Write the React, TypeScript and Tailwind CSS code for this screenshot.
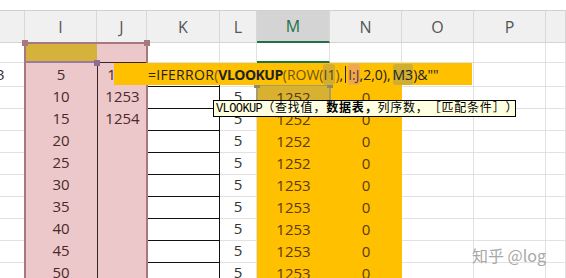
import React from "react";

const cols = ["H", "I", "J", "K", "L", "M", "N", "O", "P", ""];
const widths = "25px 72px 50px 73px 37px 73px 72px 72px 72px 20px";

const iVals = ["", "5", "10", "15", "20", "25", "30", "35", "40", "45", "50"];
const jVals = ["", "1", "1253", "1254", "", "", "", "", "", "", ""];
const mVals = ["", "", "1252", "1252", "1252", "1252", "1253", "1253", "1253", "1253", "1253"];

const cellBase = "h-full flex items-center justify-center border-r border-b border-[#e1e1e1]";

function cellFor(col: number, row: number) {
  // row 0 is row 1 of the sheet
  if (col === 0) {
    return (
      <div className={cellBase + " relative overflow-hidden"}>
        {row === 1 && <span className="absolute left-[-4px]">3</span>}
      </div>
    );
  }
  if (col === 1) {
    if (row === 0) return <div className="h-full bg-[#d5b23c] border-b-2 border-[#9b7ca0]" />;
    return (
      <div className="h-full flex items-center justify-center bg-[#ecc8ca] border-b border-[#e0b6b9] text-[#4a2a2a]">
        {iVals[row]}
      </div>
    );
  }
  if (col === 2) {
    return (
      <div
        className={
          "h-full flex items-center justify-center bg-[#ecc8ca] text-[#4a2a2a] " +
          (row === 0 ? "border-b border-[#3a2424]" : "border-l border-b border-[#3a2424]")
        }
      >
        {row === 1 ? <span className="mr-[22px]">1</span> : jVals[row]}
      </div>
    );
  }
  if (col === 3) {
    return (
      <div
        className={
          "h-full " +
          (row === 0 ? "border-b border-r border-[#e1e1e1]" : "border-b border-r border-[#111]")
        }
      />
    );
  }
  if (col === 4) {
    return <div className={cellBase}>{row >= 2 ? "5" : ""}</div>;
  }
  if (col === 5) {
    if (row === 0) return <div className="h-full border-r border-[#e1e1e1] border-b-2 border-b-[#217346]" />;
    if (row === 1) return <div className={cellBase} />;
    return (
      <div
        className={
          "h-full flex items-center justify-center text-[#5a3a10] " +
          (row === 2 ? "bg-[#d9b130]" : "bg-[#ffc000]")
        }
      >
        {mVals[row]}
      </div>
    );
  }
  if (col === 6) {
    if (row < 2) return <div className={cellBase} />;
    return <div className="h-full flex items-center justify-center bg-[#ffc000] text-[#5a3a10]">0</div>;
  }
  return <div className={cellBase} />;
}

export default function App() {
  const rows = Array.from({ length: 11 }, (_, i) => i);
  return (
    <div
      className="relative w-[566px] h-[278px] overflow-hidden bg-white text-[15px] text-[#333]"
      style={{ fontFamily: '"Open Sans", "Noto Sans", "Noto Sans CJK SC", sans-serif' }}
    >
      <div className="h-[11px] border-b border-[#d0d0d0]" />
      {/* column headers */}
      <div className="grid h-[32px] bg-[#f0f0f0]" style={{ gridTemplateColumns: widths }}>
        {cols.map((c, i) => (
          <div
            key={i}
            className={
              "flex items-center justify-center border-r border-[#d8d8d8] text-[16px] " +
              (c === "M"
                ? "bg-[#d4d4d4] text-[#217346] border-b-2 border-b-[#217346]"
                : "text-[#555] border-b border-b-[#d4d4d4]")
            }
          >
            {c === "H" ? "" : c}
          </div>
        ))}
      </div>
      {/* rows */}
      {rows.map((r) => (
        <div
          key={r}
          className={"grid " + (r === 0 ? "h-[20px]" : "h-[22px]")}
          style={{ gridTemplateColumns: widths }}
        >
          {cols.map((_, c) => (
            <React.Fragment key={c}>{cellFor(c, r)}</React.Fragment>
          ))}
        </div>
      ))}

      {/* I:J reference border */}
      <div className="absolute left-[24px] top-[42px] w-[124px] h-[260px] border-2 border-[#a8787f]">
        <div className="absolute left-[-4px] top-[-4px] w-[6px] h-[6px] bg-[#a8787f]" />
        <div className="absolute right-[-4px] top-[-4px] w-[6px] h-[6px] bg-[#a8787f]" />
      </div>
      <div className="absolute left-[94px] top-[60px] w-[6px] h-[6px] bg-[#8e6c94]" />

      {/* M3 reference border */}
      <div className="absolute left-[256px] top-[84px] w-[75px] h-[24px] border-2 border-[#a49f6a]">
        <div className="absolute left-[-4px] top-[-4px] w-[6px] h-[6px] bg-[#8f8b60]" />
        <div className="absolute right-[-4px] top-[-4px] w-[6px] h-[6px] bg-[#8f8b60]" />
      </div>

      {/* in-cell editing box */}
      <div className="absolute left-[114px] top-[63px] w-[358px] h-[22px] bg-[#ffc000] flex items-center pl-[34px] text-[14px] text-[#222] whitespace-nowrap">
        <span className="tracking-[0.3px]">=IFERROR</span>
        <span className="text-[#7a5a10]">(</span>
        <span className="font-bold tracking-[-0.5px]">VLOOKUP</span>
        <span className="text-[#6e5418]">(ROW(</span>
        <span className="bg-[#d4ad2e] rounded-[3px] text-[#5a4510]">I1</span>
        <span className="text-[#6e5418]">)</span>
        <span>,</span>
        <span className="inline-block w-[1px] h-[17px] bg-[#222] mx-[2px]" />
        <span className="bg-[#f0a850] rounded-[3px] text-[#5a3a20]">I:J</span>
        <span>,2,0),</span>
        <span className="bg-[#cfae30] rounded-[3px] ml-[2px]">M3</span>
        <span>)&amp;""</span>
      </div>

      {/* function tooltip */}
      <div
        className="absolute left-[213px] top-[100px] w-[303px] h-[17px] bg-[#ffffe1] border border-black flex items-center pl-[2px] text-[12px] text-black whitespace-nowrap leading-none [text-spacing-trim:space-all]"
        style={{ fontFamily: '"Liberation Mono", "Noto Sans CJK SC", monospace' }}
      >
        <span className="tracking-[-0.6px]">VLOOKUP </span>
        <span className="tracking-[0.8px]">（查找值，</span>
        <span className="font-bold tracking-[0.8px]">数据表，</span>
        <span className="tracking-[0.8px]">列序数，［匹配条件］）</span>
      </div>

      {/* watermark */}
      <div
        className="absolute left-[472px] top-[243px] text-[16px] text-[#a8a8a8] whitespace-nowrap"
        style={{ fontFamily: '"Noto Sans CJK SC", sans-serif' }}
      >
        知乎 @log
      </div>
    </div>
  );
}
